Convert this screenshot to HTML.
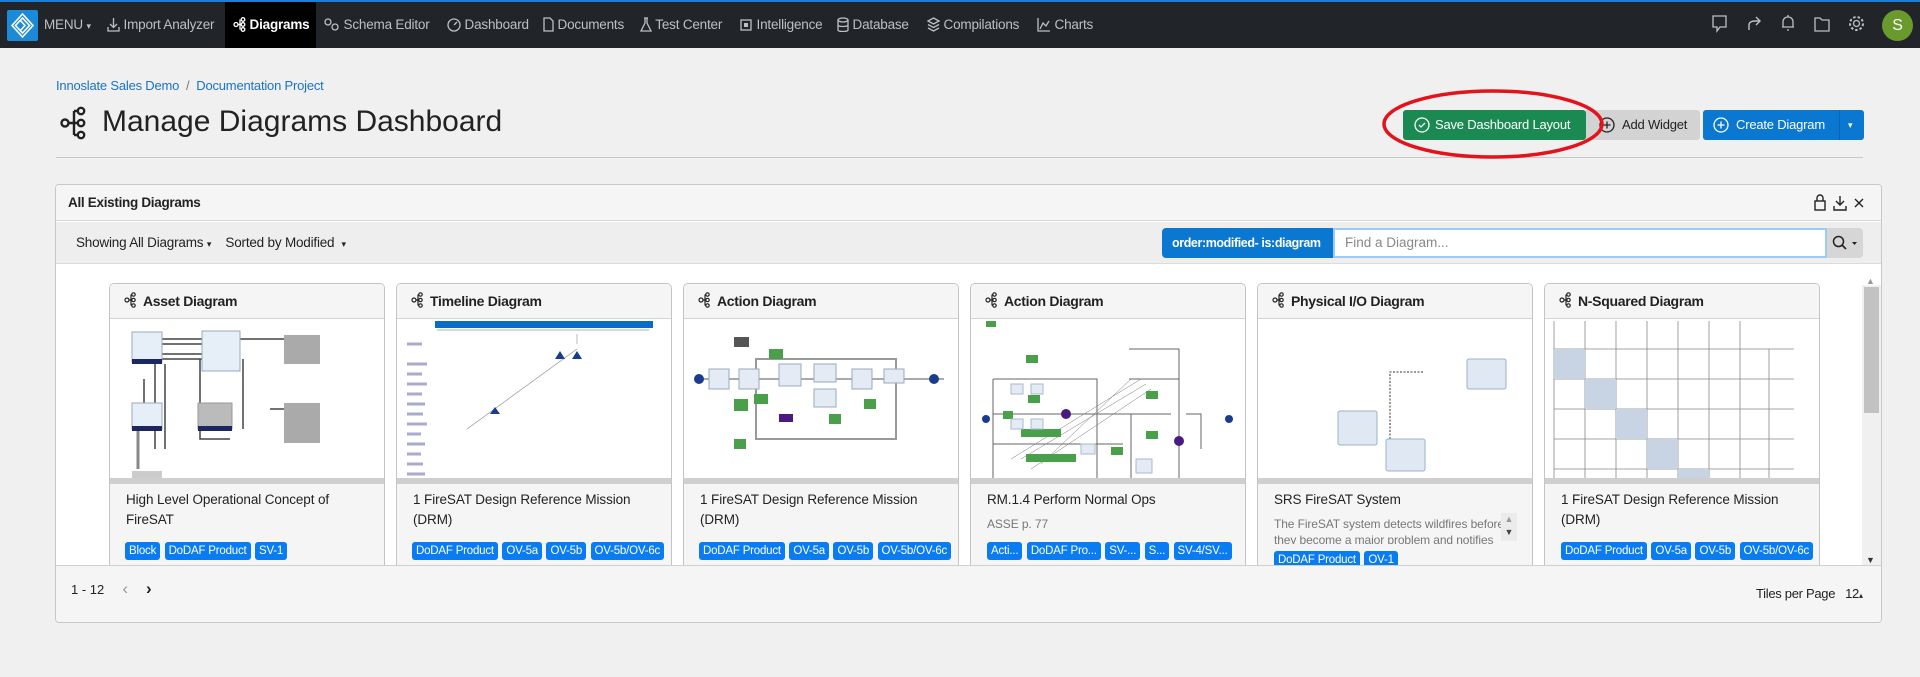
<!DOCTYPE html>
<html><head><meta charset="utf-8">
<style>
*{box-sizing:border-box;margin:0;padding:0}
body{width:1920px;height:677px;overflow:hidden;background:#f0f0f0;font-family:"Liberation Sans",Arial,sans-serif;color:#222;position:relative}
.topline{position:absolute;left:0;top:0;width:1920px;height:2px;background:#1a7fd6}
.nav{position:absolute;left:0;top:2px;width:1920px;height:46px;background:#212429;color:#bcc0c4;font-size:13.5px;letter-spacing:-0.2px}
.nav .it{position:absolute;top:0;height:46px;line-height:46px;white-space:nowrap}
.nav svg{vertical-align:-3px}
.logo{position:absolute;left:7px;top:8px;width:31px;height:31px;background:#1b8ad8;border-radius:2px}
.active{background:#000;color:#fff}
.abs{position:absolute}
.crumb{left:56px;top:78px;font-size:13px;color:#1a73c4;letter-spacing:-0.2px}
h1{position:absolute;left:102px;top:105px;font-size:30px;font-weight:normal;color:#222}
.hr{left:56px;top:157px;width:1807px;height:1px;background:#c8c8c8}
.btn{position:absolute;top:110px;height:30px;line-height:30px;font-size:13px;border-radius:3px;white-space:nowrap;letter-spacing:-0.2px}
.panel{left:55px;top:184px;width:1827px;height:439px;border:1px solid #c8c8c8;border-radius:4px;background:#fff;overflow:hidden}
.card{position:absolute;top:283px;width:276px;height:290px;border:1px solid #c4c4c4;border-radius:5px 5px 0 0;background:#fff;overflow:hidden}
.card .hd{height:35px;background:#f5f5f5;border-bottom:1px solid #d4d4d4;font-size:14px;font-weight:bold;color:#222;line-height:34px;padding-left:14px;letter-spacing:-0.3px}
.card .hd svg{vertical-align:-2px;margin-right:7px}
.card .img{height:165px;background:#fff;border-bottom:6px solid #cfcfcf;position:relative;overflow:hidden}
.card .txt{background:#f5f5f5;height:100px;padding:6px 16px 0 16px;font-size:13.5px;line-height:20px;color:#222;letter-spacing:-0.1px}
.tag{display:inline-block;background:#0a7cf2;color:#fff;font-size:11.5px;height:18px;line-height:18px;padding:0 4px;border-radius:3px;margin-right:0;letter-spacing:-0.2px}
.tags{position:absolute;top:541px;white-space:nowrap}
.desc{color:#777;font-size:12px}
.foot{position:absolute;left:56px;top:565px;width:1825px;height:57px;background:#f5f5f5;border-top:1px solid #d0d0d0;border-radius:0 0 4px 4px;z-index:5}
</style></head><body>
<div class="topline"></div>
<div class="nav">
 <div class="logo"><svg width="31" height="31" viewBox="0 0 31 31"><path d="M15.5 4 L26 15.5 L15.5 27 L5 15.5Z M15.5 8 L22.5 15.5 L15.5 23 L8.5 15.5Z" fill="none" stroke="#fff" stroke-width="1.6"/><path d="M13 10 L18 15.5 L13 21" fill="none" stroke="#fff" stroke-width="1.6"/></svg></div>
 <div class="it" style="left:44px">MENU <span style="font-size:9px">▾</span></div>
 <div class="it" style="left:107px"><svg width="13" height="15"><path d="M6.5 1v9M3 7l3.5 3.5L10 7M1 10v4h11v-4" fill="none" stroke="#bcc0c4" stroke-width="1.3"/></svg> Import Analyzer</div>
 <div class="it active" style="left:225px;width:91px;padding-left:8px;font-weight:bold"><svg width="13" height="15"><g fill="none" stroke="#fff" stroke-width="1.3"><circle cx="3" cy="7.5" r="2"/><circle cx="10" cy="2.5" r="1.8"/><circle cx="10" cy="7.5" r="1.8"/><circle cx="10" cy="12.5" r="1.8"/><path d="M5 7.5h3M7 2.5v10"/></g></svg> Diagrams</div>
 <div class="it" style="left:323px"><svg width="17" height="15"><g fill="none" stroke="#bcc0c4" stroke-width="1.3"><circle cx="5" cy="5" r="3"/><circle cx="12" cy="10" r="3"/></g></svg> Schema Editor</div>
 <div class="it" style="left:447px"><svg width="14" height="15"><circle cx="7" cy="8" r="6" fill="none" stroke="#bcc0c4" stroke-width="1.3"/><path d="M7 8l3-3" stroke="#bcc0c4" stroke-width="1.3"/></svg> Dashboard</div>
 <div class="it" style="left:543px"><svg width="11" height="15"><path d="M1 1h6l3 3v10H1z" fill="none" stroke="#bcc0c4" stroke-width="1.3"/></svg> Documents</div>
 <div class="it" style="left:640px"><svg width="12" height="15"><path d="M4 1h4M5 1v5L1 14h10L7 6V1" fill="none" stroke="#bcc0c4" stroke-width="1.3"/></svg> Test Center</div>
 <div class="it" style="left:739px"><svg width="14" height="15"><rect x="2" y="3" width="10" height="10" fill="none" stroke="#bcc0c4" stroke-width="1.3"/><rect x="5" y="6" width="4" height="4" fill="#bcc0c4"/></svg> Intelligence</div>
 <div class="it" style="left:837px"><svg width="12" height="15"><ellipse cx="6" cy="3" rx="5" ry="2" fill="none" stroke="#bcc0c4" stroke-width="1.3"/><path d="M1 3v10c0 2 10 2 10 0V3M1 8c0 2 10 2 10 0" fill="none" stroke="#bcc0c4" stroke-width="1.3"/></svg> Database</div>
 <div class="it" style="left:927px"><svg width="13" height="15"><path d="M6.5 1L12 4 6.5 7 1 4zM1 7.5l5.5 3 5.5-3M1 11l5.5 3 5.5-3" fill="none" stroke="#bcc0c4" stroke-width="1.3"/></svg> Compilations</div>
 <div class="it" style="left:1037px"><svg width="14" height="15"><path d="M1 1v13h12M3 12l3-6 3 3 3-5" fill="none" stroke="#bcc0c4" stroke-width="1.3"/></svg> Charts</div>
 <svg class="abs" style="left:1712px;top:13px" width="16" height="18"><path d="M1 1h13v11H8l-3 4v-4H1z" fill="none" stroke="#bcc0c4" stroke-width="1.3"/></svg>
 <svg class="abs" style="left:1747px;top:14px" width="16" height="16"><path d="M2 14V9c0-3 3-4 6-4h4M9 1l4 4-4 4" fill="none" stroke="#bcc0c4" stroke-width="1.4"/></svg>
 <svg class="abs" style="left:1781px;top:12px" width="14" height="18"><path d="M2 13V8c0-3 2-5 5-5s5 2 5 5v5zM1 13h12M6 16h2M7 1v2" fill="none" stroke="#bcc0c4" stroke-width="1.3"/></svg>
 <svg class="abs" style="left:1814px;top:14px" width="16" height="16"><path d="M1 2h5l2 2h7v11H1z" fill="none" stroke="#bcc0c4" stroke-width="1.3"/></svg>
 <svg class="abs" style="left:1848px;top:13px" width="17" height="17"><circle cx="8.5" cy="8.5" r="3" fill="none" stroke="#bcc0c4" stroke-width="1.3"/><circle cx="8.5" cy="8.5" r="6.5" fill="none" stroke="#bcc0c4" stroke-width="2" stroke-dasharray="2.5 2"/></svg>
 <div class="abs" style="left:1882px;top:8px;width:31px;height:31px;border-radius:50%;background:#6a9a2e;color:#fff;text-align:center;line-height:31px;font-size:16px">S</div>
</div>

<div class="abs crumb">Innoslate Sales Demo &nbsp;<span style="color:#777">/</span>&nbsp; Documentation Project</div>
<svg class="abs" style="left:60px;top:106px" width="30" height="34"><g fill="none" stroke="#222" stroke-width="2.4"><circle cx="5" cy="17" r="3.5"/><circle cx="21" cy="5" r="3.2"/><circle cx="21" cy="17" r="3.2"/><circle cx="21" cy="29" r="3.2"/><path d="M9 17h9M14 5v24M14 5h4M14 29h4"/></g></svg>
<h1>Manage Diagrams Dashboard</h1>
<div class="abs hr"></div>

<div class="btn" style="left:1403px;width:183px;background:#1a8a52;color:#fff;padding-left:32px"><svg class="abs" style="left:11px;top:7px" width="16" height="16"><circle cx="8" cy="8" r="7" fill="none" stroke="#fff" stroke-width="1.3"/><path d="M5 8l2 2 4-4" fill="none" stroke="#fff" stroke-width="1.3"/></svg>Save Dashboard Layout</div>
<div class="btn" style="left:1586px;width:114px;background:#d3d3d3;color:#222;padding-left:36px;border-radius:0 3px 3px 0"><svg class="abs" style="left:13px;top:7px" width="16" height="16"><circle cx="8" cy="8" r="7" fill="none" stroke="#222" stroke-width="1.3"/><path d="M8 4.5v7M4.5 8h7" stroke="#222" stroke-width="1.3"/></svg>Add Widget</div>
<div class="btn" style="left:1703px;width:161px;background:#0a77d1;color:#fff;padding-left:33px"><svg class="abs" style="left:10px;top:7px" width="16" height="16"><circle cx="8" cy="8" r="7" fill="none" stroke="#fff" stroke-width="1.3"/><path d="M8 4.5v7M4.5 8h7" stroke="#fff" stroke-width="1.3"/></svg>Create Diagram<span class="abs" style="left:136px;top:0;width:1px;height:30px;background:#0864b0"></span><span class="abs" style="left:145px;top:0;font-size:9px">▾</span></div>
<svg class="abs" style="left:1380px;top:86px" width="230" height="76"><ellipse cx="113" cy="38" rx="109" ry="33" fill="none" stroke="#e3121b" stroke-width="3.5"/></svg>

<div class="abs panel">
 <div class="abs" style="left:0;top:0;width:1827px;height:36px;background:#f5f5f5;border-bottom:1px solid #d8d8d8;font-size:13.5px;font-weight:bold;line-height:36px;padding-left:12px;letter-spacing:-0.3px">All Existing Diagrams</div>
 <svg class="abs" style="left:1758px;top:9px" width="70" height="18"><g fill="none" stroke="#222" stroke-width="1.4"><rect x="1" y="7" width="10" height="9"/><path d="M3 7V4a3 3 0 0 1 6 0v3"/><path d="M26 2v9M22 7l4 4 4-4M20 12v4h12v-4"/><path d="M41 5l8 8M49 5l-8 8"/></g></svg>
 <div class="abs" style="left:0;top:37px;width:1827px;height:42px;background:#eeeeee;border-bottom:1px solid #dcdcdc;font-size:13.5px;line-height:42px;padding-left:20px;letter-spacing:-0.2px">Showing All Diagrams <span style="font-size:9px">▾</span>&nbsp;&nbsp;&nbsp; Sorted by Modified &nbsp;<span style="font-size:9px">▾</span></div>
 <div class="abs" style="left:1106px;top:43px;width:171px;height:30px;background:#0a77d1;color:#fff;font-size:12.5px;font-weight:bold;line-height:30px;padding-left:10px;border-radius:4px 0 0 4px;white-space:nowrap;letter-spacing:-0.4px">order:modified- is:diagram</div>
 <div class="abs" style="left:1277px;top:43px;width:494px;height:30px;background:#fff;border:2px solid #9ccaf3;font-size:13.5px;color:#888;line-height:26px;padding-left:10px">Find a Diagram...</div>
 <div class="abs" style="left:1771px;top:43px;width:36px;height:30px;background:#d6d6d6;border-radius:0 4px 4px 0"><svg class="abs" style="left:5px;top:7px" width="30" height="16"><circle cx="6.5" cy="6.5" r="5" fill="none" stroke="#222" stroke-width="1.5"/><path d="M10 10l4 4" stroke="#222" stroke-width="1.6"/><path d="M20 7h5l-2.5 3z" fill="#222"/></svg></div>
 <div class="abs" style="left:1806px;top:100px;width:20px;height:282px;background:#f0f0f0"></div>
 <div class="abs" style="left:1808px;top:102px;width:15px;height:126px;background:#c2c2c2"></div>
 <div class="abs" style="left:1810px;top:91px;font-size:9px;color:#999">▲</div>
 <div class="abs" style="left:1810px;top:370px;font-size:9px;color:#333">▼</div>
</div>

<!-- cards -->
<div class="card" style="left:109px"><div class="hd"><svg width="12" height="16"><g fill="none" stroke="#222" stroke-width="1.2"><circle cx="3" cy="8" r="2"/><circle cx="9.5" cy="2.5" r="1.7"/><circle cx="9.5" cy="8" r="1.7"/><circle cx="9.5" cy="13.5" r="1.7"/><path d="M5 8h3M7 2.5v11"/></g></svg>Asset Diagram</div>
 <div class="img"><svg width="276" height="165"><g stroke="#444" fill="none"><path d="M30 20h100M30 25h100M30 35h100M30 40h100M55 45v85M45 45v85M90 40v80h30M133 40v70M34 60v30M200 90h-40M70 20h140" stroke-width="1.5"/><path d="M28 150v-40" stroke="#888" stroke-width="3"/></g><rect x="22" y="13" width="30" height="30" fill="#e6eef8" stroke="#9ab"/><rect x="22" y="40" width="30" height="5" fill="#1c2760"/><rect x="92" y="12" width="38" height="40" fill="#e6eef8" stroke="#9ab"/><rect x="174" y="16" width="36" height="29" fill="#aaa"/><rect x="22" y="84" width="30" height="26" fill="#e6eef8" stroke="#9ab"/><rect x="22" y="107" width="30" height="5" fill="#1c2760"/><rect x="88" y="84" width="34" height="26" fill="#bbb" stroke="#999"/><rect x="88" y="107" width="34" height="5" fill="#1c2760"/><rect x="174" y="84" width="36" height="40" fill="#aaa"/><rect x="22" y="152" width="30" height="20" fill="#ccc"/></svg></div>
 <div class="txt">High Level Operational Concept of<br>FireSAT</div></div>
<div class="card" style="left:396px"><div class="hd"><svg width="12" height="16"><g fill="none" stroke="#222" stroke-width="1.2"><circle cx="3" cy="8" r="2"/><circle cx="9.5" cy="2.5" r="1.7"/><circle cx="9.5" cy="8" r="1.7"/><circle cx="9.5" cy="13.5" r="1.7"/><path d="M5 8h3M7 2.5v11"/></g></svg>Timeline Diagram</div>
 <div class="img"><svg width="276" height="165"><rect x="38" y="2" width="218" height="7" fill="#0a6cc4"/><path d="M40 11h212" stroke="#9bb" /><g stroke="#aac" stroke-width="3"><path d="M10 25h15M10 45h20M10 55h15M10 65h20M10 75h15M10 85h18M10 95h16M10 105h20M10 115h14M10 125h18M10 135h14M10 145h16M10 155h18"/></g><path d="M180 15v10M70 110l110-80" stroke="#888" stroke-width=".6"/><path d="M175 40l5-8 5 8z M158 40l5-8 5 8z" fill="#1a3c8c"/><path d="M93 95l5-7 5 7z" fill="#1a3c8c"/></svg></div>
 <div class="txt">1 FireSAT Design Reference Mission<br>(DRM)</div></div>
<div class="card" style="left:683px"><div class="hd"><svg width="12" height="16"><g fill="none" stroke="#222" stroke-width="1.2"><circle cx="3" cy="8" r="2"/><circle cx="9.5" cy="2.5" r="1.7"/><circle cx="9.5" cy="8" r="1.7"/><circle cx="9.5" cy="13.5" r="1.7"/><path d="M5 8h3M7 2.5v11"/></g></svg>Action Diagram</div>
 <div class="img"><svg width="276" height="165"><path d="M72 40h140v80H72z" fill="none" stroke="#999" stroke-width="2"/><path d="M15 60h245" stroke="#555"/><circle cx="15" cy="60" r="5" fill="#1a3c8c"/><circle cx="250" cy="60" r="5" fill="#1a3c8c"/><g fill="#e4ebf4" stroke="#9ab"><rect x="25" y="50" width="20" height="20"/><rect x="55" y="50" width="20" height="20"/><rect x="95" y="45" width="22" height="22"/><rect x="130" y="45" width="22" height="18"/><rect x="130" y="70" width="22" height="18"/><rect x="168" y="50" width="20" height="20"/><rect x="200" y="50" width="20" height="14"/></g><g fill="#4aa04a"><rect x="85" y="30" width="14" height="10"/><rect x="50" y="80" width="14" height="12"/><rect x="70" y="75" width="14" height="10"/><rect x="145" y="95" width="12" height="10"/><rect x="180" y="80" width="12" height="10"/><rect x="50" y="120" width="12" height="10"/></g><rect x="50" y="18" width="15" height="10" fill="#555"/><rect x="95" y="95" width="14" height="8" fill="#4a1a80"/></svg></div>
 <div class="txt">1 FireSAT Design Reference Mission<br>(DRM)</div></div>
<div class="card" style="left:970px"><div class="hd"><svg width="12" height="16"><g fill="none" stroke="#222" stroke-width="1.2"><circle cx="3" cy="8" r="2"/><circle cx="9.5" cy="2.5" r="1.7"/><circle cx="9.5" cy="8" r="1.7"/><circle cx="9.5" cy="13.5" r="1.7"/><path d="M5 8h3M7 2.5v11"/></g></svg>Action Diagram</div>
 <div class="img"><svg width="276" height="165"><g fill="none" stroke="#666"><path d="M22 60h104v100M22 60v100M158 30h50v130M150 95h50M215 95h15v35M160 95v70M22 95h130M22 125h130M158 60h50"/></g><g stroke="#777" stroke-width=".5"><path d="M40 140L170 60M50 140L175 65M60 150L180 70M70 145L160 60"/></g><g fill="#4aa04a"><rect x="55" y="36" width="12" height="8"/><rect x="57" y="76" width="12" height="8"/><rect x="32" y="92" width="10" height="8"/><rect x="50" y="110" width="40" height="8"/><rect x="55" y="135" width="50" height="8"/><rect x="175" y="72" width="12" height="8"/><rect x="175" y="112" width="12" height="8"/><rect x="140" y="128" width="12" height="8"/></g><g fill="#e4ebf4" stroke="#abc"><rect x="40" y="65" width="12" height="10"/><rect x="60" y="65" width="12" height="10"/><rect x="40" y="100" width="12" height="10"/><rect x="60" y="100" width="12" height="10"/><rect x="110" y="125" width="14" height="10"/><rect x="165" y="140" width="16" height="14"/></g><circle cx="15" cy="100" r="4" fill="#1a3c8c"/><circle cx="258" cy="100" r="4" fill="#1a3c8c"/><circle cx="208" cy="122" r="5" fill="#4a1a80"/><circle cx="95" cy="95" r="5" fill="#4a1a80"/><rect x="15" y="2" width="10" height="6" fill="#4aa04a"/></svg></div>
 <div class="txt">RM.1.4 Perform Normal Ops<div class="desc" style="margin-top:4px">ASSE p. 77</div></div></div>
<div class="card" style="left:1257px"><div class="hd"><svg width="12" height="16"><g fill="none" stroke="#222" stroke-width="1.2"><circle cx="3" cy="8" r="2"/><circle cx="9.5" cy="2.5" r="1.7"/><circle cx="9.5" cy="8" r="1.7"/><circle cx="9.5" cy="13.5" r="1.7"/><path d="M5 8h3M7 2.5v11"/></g></svg>Physical I/O Diagram</div>
 <div class="img"><svg width="276" height="165"><path d="M165 53h-33v70" fill="none" stroke="#333" stroke-dasharray="2 1.5"/><g fill="#dfe8f3" stroke="#9bb0c8"><rect x="209" y="40" width="39" height="30" rx="2"/><rect x="80" y="92" width="39" height="34" rx="2"/><rect x="128" y="120" width="39" height="32" rx="2"/></g></svg></div>
 <div class="txt">SRS FireSAT System<div class="desc" style="margin-top:4px;line-height:20px;height:20px;overflow:hidden;width:230px;white-space:nowrap">The FireSAT system detects wildfires before</div><div class="desc" style="line-height:12px;height:10px;overflow:hidden;white-space:nowrap">they become a major problem and notifies</div></div></div>
<div class="abs" style="left:1501px;top:513px;width:16px;height:28px;background:#ebebeb;font-size:9px;text-align:center;line-height:13px;color:#999">▲<br><span style="color:#444">▼</span></div>
<div class="card" style="left:1544px"><div class="hd"><svg width="12" height="16"><g fill="none" stroke="#222" stroke-width="1.2"><circle cx="3" cy="8" r="2"/><circle cx="9.5" cy="2.5" r="1.7"/><circle cx="9.5" cy="8" r="1.7"/><circle cx="9.5" cy="13.5" r="1.7"/><path d="M5 8h3M7 2.5v11"/></g></svg>N-Squared Diagram</div>
 <div class="img"><svg width="276" height="165"><g stroke="#888" stroke-width=".8" fill="none"><path d="M9 2v165M40 2v165M71 2v165M102 2v165M133 2v165M164 2v165M195 2v165M224 30v135M9 30h240M9 60h240M9 90h240M9 120h240M9 150h240"/></g><g fill="#c8d4e4"><rect x="9" y="30" width="31" height="30"/><rect x="40" y="60" width="31" height="30"/><rect x="71" y="90" width="31" height="30"/><rect x="102" y="120" width="31" height="30"/><rect x="133" y="150" width="31" height="15"/></g></svg></div>
 <div class="txt">1 FireSAT Design Reference Mission<br>(DRM)</div></div>

<!-- tags -->
<div class="tags" style="left:125px"><span class="tag">Block</span> <span class="tag">DoDAF Product</span> <span class="tag">SV-1</span></div>
<div class="tags" style="left:412px"><span class="tag">DoDAF Product</span> <span class="tag">OV-5a</span> <span class="tag">OV-5b</span> <span class="tag">OV-5b/OV-6c</span></div>
<div class="tags" style="left:699px"><span class="tag">DoDAF Product</span> <span class="tag">OV-5a</span> <span class="tag">OV-5b</span> <span class="tag">OV-5b/OV-6c</span></div>
<div class="tags" style="left:987px"><span class="tag">Acti...</span> <span class="tag">DoDAF Pro...</span> <span class="tag">SV-...</span> <span class="tag">S...</span> <span class="tag">SV-4/SV...</span></div>
<div class="tags" style="left:1274px;top:550px"><span class="tag">DoDAF Product</span> <span class="tag">OV-1</span></div>
<div class="tags" style="left:1561px"><span class="tag">DoDAF Product</span> <span class="tag">OV-5a</span> <span class="tag">OV-5b</span> <span class="tag">OV-5b/OV-6c</span></div>

<div class="foot">
 <div class="abs" style="left:15px;top:13px;font-size:13px">1 - 12 &nbsp;&nbsp;&nbsp;&nbsp;<span style="color:#999;font-size:17px">&#x2039;</span>&nbsp;&nbsp;&nbsp;&nbsp;&nbsp;<span style="font-size:17px;font-weight:bold">&#x203A;</span></div>
 <div class="abs" style="left:1700px;top:20px;font-size:13px;letter-spacing:-0.3px">Tiles per Page &nbsp;&nbsp;12<span style="font-size:8px">▴</span></div>
</div>
</body></html>
